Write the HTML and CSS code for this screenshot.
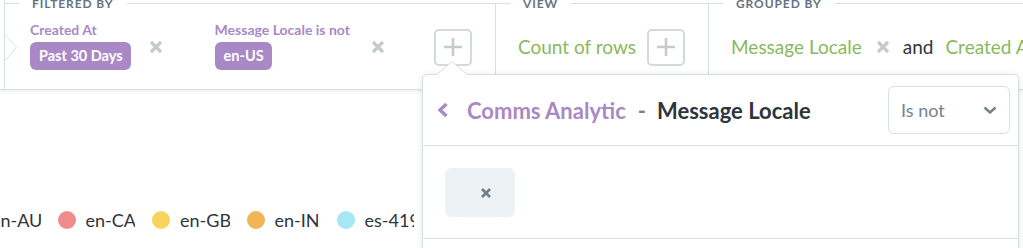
FILE: index.html
```html
<!DOCTYPE html>
<html>
<head>
<meta charset="utf-8">
<title>Query builder</title>
<link rel="stylesheet" href="styles.css">
</head>
<body>
<div class="page">
  <header class="query-bar">
    <div class="data-stub">
      <svg class="step-arrow" width="14" height="30" viewBox="0 0 14 30"><path d="M0.5 0.5 L12.5 14.5 L0.5 28.5" fill="none" stroke="#d9dee2" stroke-width="1"/></svg>
    </div>
    <fieldset class="section section-filter">
      <legend>Filtered by</legend>
      <div class="section-body">
        <div class="filter">
          <div class="filter-col">
            <span class="filter-label">Created At</span>
            <span class="pill">Past 30 Days</span>
          </div>
          <svg class="remove" viewBox="0 0 14 14"><path d="M2 2 L12 12 M12 2 L2 12"/></svg>
        </div>
        <div class="filter">
          <div class="filter-col">
            <span class="filter-label">Message Locale is not</span>
            <span class="pill">en-US</span>
          </div>
          <svg class="remove" viewBox="0 0 14 14"><path d="M2 2 L12 12 M12 2 L2 12"/></svg>
        </div>
        <button class="add-btn add-filter" type="button"><svg viewBox="0 0 20 20"><path d="M10 1 V19 M1 10 H19"/></svg></button>
      </div>
    </fieldset>
    <fieldset class="section section-view">
      <legend>View</legend>
      <div class="section-body">
        <span class="agg">Count of rows</span>
        <button class="add-btn add-view" type="button"><svg viewBox="0 0 20 20"><path d="M10 1 V19 M1 10 H19"/></svg></button>
      </div>
    </fieldset>
    <fieldset class="section section-group">
      <legend>Grouped by</legend>
      <div class="section-body">
        <span class="agg">Message Locale</span>
        <svg class="remove group-remove" viewBox="0 0 14 14"><path d="M2 2 L12 12 M12 2 L2 12"/></svg>
        <span class="and">and</span>
        <span class="agg">Created At: Day</span>
      </div>
    </fieldset>
  </header>

  <main class="chart">
    <div class="legend">
      <div class="legend-item"><span class="dot dot-blue"></span><span class="legend-label">en-AU</span></div>
      <div class="legend-item"><span class="dot dot-red"></span><span class="legend-label">en-CA</span></div>
      <div class="legend-item"><span class="dot dot-yellow"></span><span class="legend-label">en-GB</span></div>
      <div class="legend-item"><span class="dot dot-orange"></span><span class="legend-label">en-IN</span></div>
      <div class="legend-item"><span class="dot dot-cyan"></span><span class="legend-label">es-419</span></div>
      <div class="legend-item"><span class="dot dot-purple"></span><span class="legend-label">fr-FR</span></div>
    </div>
  </main>

  <div class="popover">
    <svg class="popover-arrow" width="30" height="15" viewBox="0 0 30 15">
      <path d="M0 13.5 L15 0.5 L30 13.5 L30 15 L0 15 Z" fill="#fff"/>
      <path d="M0 13.5 L15 0.5 L30 13.5" fill="none" stroke="#d9dee2" stroke-width="1"/>
    </svg>
    <div class="popover-header">
      <svg class="back" viewBox="0 0 12 16"><path d="M9.5 2 L3 8 L9.5 14"/></svg>
      <span class="table-name">Comms Analytic</span>
      <span class="dash">-</span>
      <span class="field-name">Message Locale</span>
      <div class="select">
        <span>Is not</span>
        <svg class="chev" viewBox="0 0 14 8"><path d="M1.5 1.5 L7 6.5 L12.5 1.5"/></svg>
      </div>
    </div>
    <div class="popover-body">
      <div class="token-field">
        <svg class="token-x" viewBox="0 0 12 12"><path d="M2 2 L10 10 M10 2 L2 10"/></svg>
      </div>
    </div>
    <div class="popover-footer"></div>
  </div>
</div>
</body>
</html>
```

FILE: styles.css
```css
* { box-sizing: border-box; }

html, body {
  margin: 0;
  padding: 0;
}

body {
  width: 1023px;
  height: 248px;
  overflow: hidden;
  background: #fff;
  font-family: Lato, "Noto Sans", sans-serif;
  color: #2e353b;
}

.page {
  position: relative;
  height: 248px;
  overflow: hidden;
}

/* ---------- query bar ---------- */
.query-bar {
  position: relative;
  z-index: 1;
  display: flex;
  margin-top: -4px;
  height: 94px;
  border-bottom: 1px solid #d9dee2;
  box-shadow: 0 1px 5px rgba(0, 0, 0, 0.09);
  background: #fff;
  white-space: nowrap;
}

.data-stub {
  position: relative;
  flex: none;
  width: 5px;
  border-right: 1px solid #d9dee2;
}

.step-arrow {
  position: absolute;
  left: 4px;
  top: 37px;
}

.section {
  flex: none;
  margin: 0;
  padding: 0;
  min-width: 0;
  border: 0;
  border-top: 1px solid #d9dee2;
  border-right: 1px solid #d9dee2;
}

.section legend {
  margin-left: 14px;
  padding: 0 13px;
  font-size: 12px;
  line-height: 15px;
  font-weight: 700;
  letter-spacing: 0.9px;
  text-transform: uppercase;
  color: #66737f;
}

.section-filter { width: 491px; }
.section-view { width: 213px; }
.section-group { width: 400px; border-right: 0; }

.section-body {
  display: flex;
  align-items: center;
  height: 72px;
  padding-left: 22px;
}

.section-filter .section-body { padding-left: 25px; }

.filter {
  display: flex;
  align-items: center;
}

.filter + .filter { margin-left: 52px; }

.filter-col {
  display: flex;
  flex-direction: column;
  align-items: flex-start;
  margin-bottom: 3px;
}

.filter-label {
  font-size: 14px;
  line-height: 17px;
  font-weight: 700;
  color: #a989c5;
}

.pill {
  margin-top: 4px;
  height: 28px;
  line-height: 28px;
  padding: 0 8px 0 9px;
  border-radius: 6px;
  background: #a989c5;
  color: #fff;
  font-size: 14.5px;
  font-weight: 700;
}

.remove {
  flex: none;
  width: 14px;
  height: 14px;
  margin-left: 18px;
  fill: none;
  stroke: #c3cad0;
  stroke-width: 3.2;
}

.filter:nth-child(2) .remove { margin-left: 21px; }

.add-btn {
  flex: none;
  display: flex;
  align-items: center;
  justify-content: center;
  width: 38px;
  height: 37px;
  padding: 0;
  border: 2px solid #d3d9de;
  border-radius: 5px;
  background: #fff;
}

.add-btn svg {
  width: 20px;
  height: 20px;
  fill: none;
  stroke: #c3cad0;
  stroke-width: 2.6;
}

.add-filter { margin-left: 49px; }
.add-view { margin-left: 11px; }

.agg {
  font-size: 19px;
  line-height: 22px;
  color: #89b95c;
}

.group-remove {
  margin-left: 14px;
}

.and {
  margin: 0 12px 0 13px;
  font-size: 19px;
  line-height: 22px;
  color: #2e353b;
}

/* ---------- chart legend ---------- */
.chart {
  height: 158px;
}

.legend {
  display: flex;
  align-items: center;
  margin-top: 119px;
  margin-left: -37px;
  height: 22px;
  white-space: nowrap;
}

.legend-item {
  display: flex;
  align-items: center;
  flex: none;
  margin-right: 17px;
}

.dot {
  flex: none;
  width: 18px;
  height: 18px;
  border-radius: 50%;
}

.dot-blue { background: #509ee3; }
.dot-red { background: #ef8c8c; }
.dot-yellow { background: #f9d45c; }
.dot-orange { background: #f1b556; }
.dot-cyan { background: #a6e7f3; }
.dot-purple { background: #7172ad; }

.legend-label {
  display: block;
  max-width: 49.5px;
  overflow: hidden;
  margin-left: 10px;
  font-size: 18px;
  line-height: 22px;
  color: #2e353b;
}

/* ---------- popover ---------- */
.popover {
  position: absolute;
  z-index: 2;
  left: 422px;
  top: 74px;
  width: 597px;
  height: 200px;
  border: 1px solid #d9dee2;
  border-radius: 5px;
  background: #fff;
  box-shadow: 0 1px 7px rgba(0, 0, 0, 0.1);
}

.popover-arrow {
  position: absolute;
  left: 14px;
  top: -14px;
}

.popover-header {
  display: flex;
  align-items: center;
  height: 71px;
  padding: 0 8px 0 14px;
  border-bottom: 1px solid #d9dee2;
  white-space: nowrap;
}

.back {
  flex: none;
  width: 12px;
  height: 16px;
  fill: none;
  stroke: #a989c5;
  stroke-width: 3.4;
}

.table-name {
  margin-left: 18px;
  font-size: 22px;
  font-weight: 700;
  color: #a989c5;
}

.dash {
  margin: 0 11px 0 12px;
  font-size: 22px;
  font-weight: 700;
  color: #74838f;
}

.field-name {
  font-size: 22px;
  font-weight: 700;
  color: #2e353b;
}

.select {
  display: flex;
  align-items: center;
  justify-content: space-between;
  margin-left: auto;
  width: 122px;
  height: 48px;
  padding: 0 12px 0 12px;
  border: 1px solid #d9dee2;
  border-radius: 6px;
  font-size: 18px;
  color: #74838f;
}

.chev {
  width: 14px;
  height: 8px;
  fill: none;
  stroke: #74838f;
  stroke-width: 2.5;
}

.popover-body {
  height: 93px;
  padding: 22px;
  border-bottom: 1px solid #d9dee2;
}

.token-field {
  display: flex;
  align-items: center;
  justify-content: center;
  width: 70px;
  height: 49px;
  padding-left: 12px;
  border-radius: 6px;
  background: #edf2f5;
}

.token-x {
  width: 12px;
  height: 12px;
  fill: none;
  stroke: #6f7d88;
  stroke-width: 2.6;
}
```
